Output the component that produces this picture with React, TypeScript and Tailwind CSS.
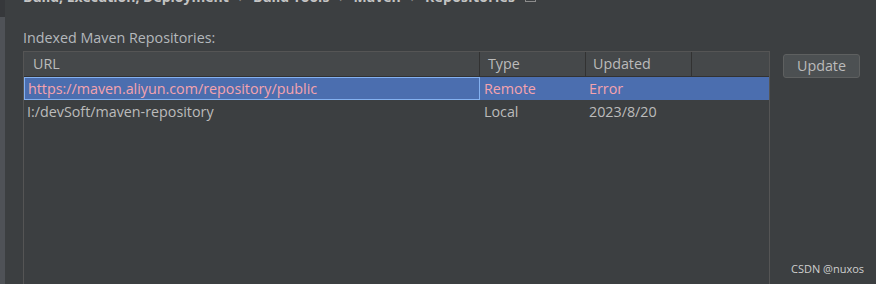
import React from 'react';

const rows = [
  { url: 'https://maven.aliyun.com/repository/public', type: 'Remote', updated: 'Error', selected: true },
  { url: 'I:/devSoft/maven-repository', type: 'Local', updated: '2023/8/20', selected: false },
];

const Sep = () => <span className="mx-[10px] text-[#8c8c8c] font-normal">›</span>;

export default function App() {
  return (
    <div
      className="relative w-[876px] h-[284px] overflow-hidden bg-[#3c3f41] text-[#bbbbbb] flex"
      style={{ fontFamily: '"Open Sans", "Noto Sans", sans-serif' }}
    >
      {/* left gutter strip */}
      <div className="w-[5px] flex flex-col shrink-0">
        <div className="h-[17px] bg-[#36383b]" />
        <div className="flex-1 bg-[#4f5257]" />
      </div>

      <div className="flex-1 pl-[18px] flex flex-col">
        {/* breadcrumb, clipped at top */}
        <div className="h-[7px] overflow-hidden relative">
          <div className="absolute bottom-0 left-0 flex items-center whitespace-nowrap text-[14px] font-bold leading-[20px] text-[#c4c4c4]">
            <span>Build, Execution, Deployment</span>
            <Sep />
            <span>Build Tools</span>
            <Sep />
            <span>Maven</span>
            <Sep />
            <span className="tracking-[0.3px]">Repositories</span>
            <span className="ml-[10px] w-[11px] h-[10px] border border-[#8c8c8c] inline-block" />
          </div>
        </div>

        <div className="mt-[21px] text-[14.3px] leading-[19px] text-[#b4b8bc]">Indexed Maven Repositories:</div>

        <div className="mt-[4px] flex flex-1 gap-[13px]">
          {/* table */}
          <div className="w-[747px] border border-[#555555] border-b-0 flex flex-col text-[14.3px]">
            <div className="flex h-[25px] bg-[#45484a] border-b border-[#323232] items-center">
              <div className="w-[456px] h-full pl-[9px] flex items-center border-r border-[#323232]">URL</div>
              <div className="w-[106px] h-full pl-[8px] flex items-center border-r border-[#323232]">Type</div>
              <div className="w-[106px] h-full pl-[7px] flex items-center border-r border-[#323232]">Updated</div>
              <div className="flex-1" />
            </div>
            {rows.map((r) => (
              <div
                key={r.url}
                className={`flex h-[23px] items-center ${r.selected ? 'bg-[#4b6eaf] text-[#f5a3ad]' : 'text-[#bbbbbb]'}`}
              >
                <div
                  className={`w-[456px] h-full pl-[3px] flex items-center ${r.selected ? 'border border-[#84b1f0]' : ''}`}
                >
                  {r.url}
                </div>
                <div className="w-[106px] pl-[4px]">{r.type}</div>
                <div className="w-[106px] pl-[3px]">{r.updated}</div>
                <div className="flex-1" />
              </div>
            ))}
          </div>

          <div className="pt-[2px]">
            <button className="w-[77px] h-[24px] rounded-[3px] border border-[#5e6060] bg-[#4c5052] text-[14.3px] text-[#bbbbbb] leading-none">
              Update
            </button>
          </div>
        </div>
      </div>

      <div className="absolute left-[791px] top-[262px] text-[11px] text-[#cfcfcf] leading-[14px]">CSDN @nuxos</div>
    </div>
  );
}
